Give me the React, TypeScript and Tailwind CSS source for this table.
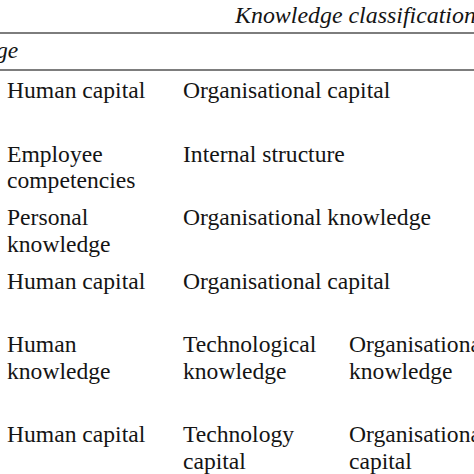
import React from "react";

type Row = { cells: { text: string[]; span?: number }[]; lines: number };

const rows: Row[] = [
  { cells: [{ text: ["Human capital"] }, { text: ["Organisational capital"], span: 2 }], lines: 2 },
  { cells: [{ text: ["Employee", "competencies"] }, { text: ["Internal structure"], span: 2 }], lines: 2 },
  { cells: [{ text: ["Personal", "knowledge"] }, { text: ["Organisational knowledge"], span: 2 }], lines: 2 },
  { cells: [{ text: ["Human capital"] }, { text: ["Organisational capital"], span: 2 }], lines: 2 },
  {
    cells: [
      { text: ["Human", "knowledge"] },
      { text: ["Technological", "knowledge"] },
      { text: ["Organisational", "knowledge"] },
    ],
    lines: 3,
  },
  {
    cells: [
      { text: ["Human capital"] },
      { text: ["Technology", "capital"] },
      { text: ["Organisational", "capital"] },
    ],
    lines: 2,
  },
];

const minH: Record<number, string> = {
  1: "min-h-[37px]",
  2: "min-h-[63.5px]",
  3: "min-h-[90px]",
};

export default function App() {
  return (
    <div className="w-[474px] h-[474px] overflow-hidden bg-white text-[#141414] text-[23.6px] leading-[26.5px] font-['Liberation_Serif','Times_New_Roman',serif]">
      <div className="h-[34px] pt-[2px] pl-[235px] whitespace-nowrap italic text-[23.9px] border-b-2 border-[#7d7d7d]">
        Knowledge classification
      </div>
      <div className="h-[37px] pt-[3px] whitespace-nowrap italic border-b-2 border-[#7d7d7d]">
        <span className="inline-block ml-[-88px]">Knowledge</span>
      </div>
      {rows.map((row, i) => (
        <div
          key={i}
          className={`grid grid-cols-[176px_166px_1fr] pl-[7px] pt-[6px] pb-[4.5px] whitespace-nowrap ${minH[row.lines]}`}
        >
          {row.cells.map((c, j) => (
            <div key={j} className={c.span === 2 ? "col-span-2" : ""}>
              {c.text.map((t, k) => (
                <div key={k}>{t}</div>
              ))}
            </div>
          ))}
        </div>
      ))}
    </div>
  );
}
